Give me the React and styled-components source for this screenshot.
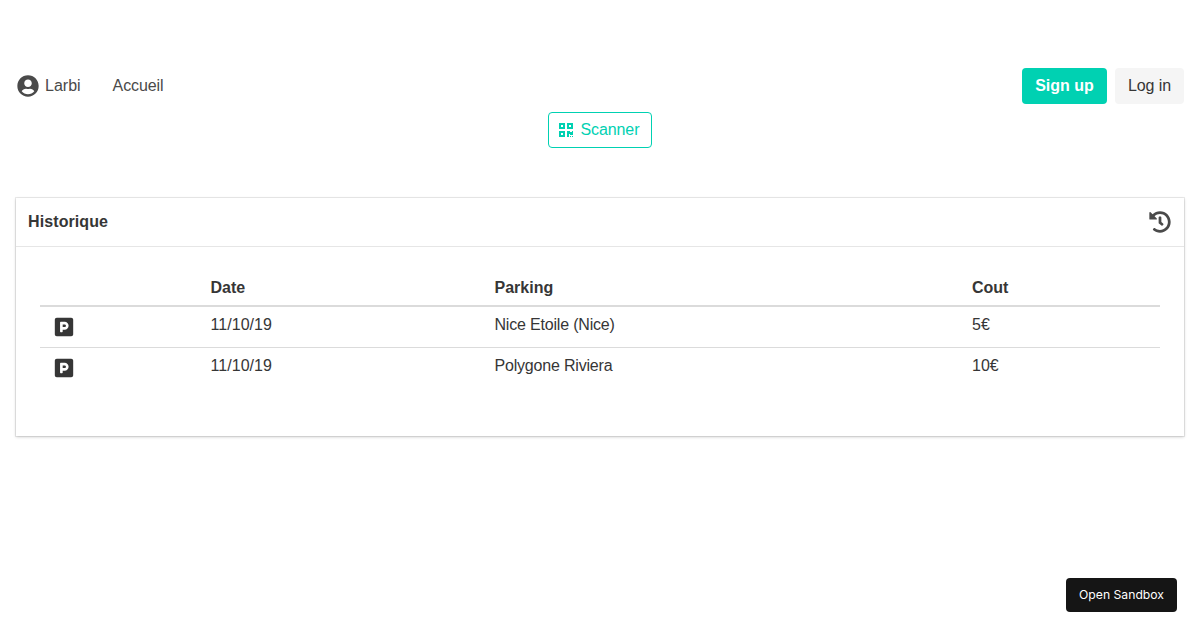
import React from "react";
import styled, { createGlobalStyle } from "styled-components";
import { FaUserCircle, FaQrcode, FaHistory, FaParking } from "react-icons/fa";

const Global = createGlobalStyle`
  html, body { margin: 0; padding: 0; background: #fff; }
  body {
    font-family: "Liberation Sans", Arial, sans-serif;
    font-size: 16px;
    line-height: 24px;
    color: #363636;
  }
  * { box-sizing: border-box; }
`;

const Page = styled.div`
  min-height: 630px;
  padding: 68px 15px 0;
`;

const Navbar = styled.nav`
  display: flex;
  align-items: center;
  justify-content: space-between;
  height: 36px;
`;

const NavGroup = styled.div`
  display: flex;
  align-items: center;
  gap: ${(p) => p.$gap}px;
  padding-left: ${(p) => p.$inset || 0}px;
  padding-right: ${(p) => p.$end || 0}px;
`;

const NavLink = styled.a`
  display: flex;
  align-items: center;
  gap: 6px;
  color: #4a4a4a;
  font-size: 16px;
  letter-spacing: ${(p) => p.$track || 0}px;
  svg { font-size: 22px; }
`;

const AuthButton = styled.a`
  display: flex;
  align-items: center;
  justify-content: center;
  width: ${(p) => p.$w}px;
  height: 36px;
  border-radius: 4px;
  font-weight: ${(p) => (p.$primary ? 700 : 400)};
  letter-spacing: ${(p) => (p.$primary ? 0 : -0.1)}px;
  background: ${(p) => (p.$primary ? "#00d1b2" : "#f5f5f5")};
  color: ${(p) => (p.$primary ? "#fff" : "#363636")};
`;

const ScannerRow = styled.div`
  display: flex;
  justify-content: center;
  margin-top: 8px;
`;

const ScannerButton = styled.a`
  display: flex;
  align-items: center;
  gap: 6.5px;
  width: 104px;
  height: 36px;
  padding-left: 9px;
  background: #fff;
  border: 1px solid #00d1b2;
  border-radius: 4px;
  color: #00d1b2;
  letter-spacing: -0.1px;
  svg { font-size: 16px; }
`;

const Card = styled.section`
  margin: 50px 1px 0;
  height: 238px;
  background: #fff;
  box-shadow: 0 1px 3px rgba(10, 10, 10, 0.2), 0 0 0 1px rgba(10, 10, 10, 0.08);
`;

const CardHeader = styled.header`
  display: flex;
  align-items: center;
  justify-content: space-between;
  height: 49px;
  padding: 0 13px 0 12px;
  border-bottom: 1px solid #e6e6e6;
`;

const CardTitle = styled.h2`
  margin: 0;
  font-size: 16px;
  font-weight: 700;
  color: #363636;
  line-height: 24px;
  letter-spacing: 0.1px;
`;

const HeaderIcon = styled.span`
  display: flex;
  color: #4a4a4a;
  svg { font-size: 22px; }
`;

const CardContent = styled.div`
  padding: 19px 24px;
`;

const Table = styled.table`
  width: 100%;
  table-layout: fixed;
  border-collapse: collapse;
`;

const Head = styled.th`
  width: ${(p) => p.$w}px;
  padding: 10px 12px 5px;
  text-align: left;
  font-weight: 700;
  color: #363636;
  border-bottom: 2px solid #dbdbdb;
`;

const Row = styled.tr`
  &:not(:last-child) td { border-bottom: 1px solid #dbdbdb; }
`;

const Cell = styled.td`
  padding: 6px 12px 10px;
  vertical-align: top;
  color: #363636;
  letter-spacing: ${(p) => p.$track || 0}px;
`;

const IconCell = styled.td`
  padding: 8px 12px;
  vertical-align: top;
`;

const ParkIcon = styled.span`
  display: flex;
  align-items: center;
  justify-content: center;
  width: 24px;
  height: 24px;
  color: #363636;
  transform: translate(-0.5px, -0.5px);
  svg { font-size: 21px; }
`;

const SandboxButton = styled.a`
  position: fixed;
  right: 23px;
  bottom: 18px;
  display: flex;
  align-items: center;
  justify-content: center;
  width: 111px;
  height: 34px;
  background: #151515;
  border-radius: 4px;
  color: #fff;
  font-family: Inter, "Liberation Sans", sans-serif;
  font-size: 12.2px;
`;

const rows = [
  { date: "11/10/19", parking: "Nice Etoile (Nice)", cost: "5€" },
  { date: "11/10/19", parking: "Polygone Riviera", cost: "10€" },
];

export default function App() {
  return (
    <Page>
      <Global />
      <Navbar>
        <NavGroup $gap={32} $inset={2}>
          <NavLink><FaUserCircle />Larbi</NavLink>
          <NavLink $track={-0.1}>Accueil</NavLink>
        </NavGroup>
        <NavGroup $gap={8} $end={1}>
          <AuthButton $primary $w={85}>Sign up</AuthButton>
          <AuthButton $w={69}>Log in</AuthButton>
        </NavGroup>
      </Navbar>
      <ScannerRow>
        <ScannerButton><FaQrcode />Scanner</ScannerButton>
      </ScannerRow>
      <Card>
        <CardHeader>
          <CardTitle>Historique</CardTitle>
          <HeaderIcon><FaHistory /></HeaderIcon>
        </CardHeader>
        <CardContent>
          <Table>
            <thead>
              <tr>
                <Head $w={158.5} />
                <Head $w={284}>Date</Head>
                <Head $w={477.5}>Parking</Head>
                <Head $w={200}>Cout</Head>
              </tr>
            </thead>
            <tbody>
              {rows.map((r) => (
                <Row key={r.parking}>
                  <IconCell><ParkIcon><FaParking /></ParkIcon></IconCell>
                  <Cell $track={0.05}>{r.date}</Cell>
                  <Cell $track={-0.19}>{r.parking}</Cell>
                  <Cell>{r.cost}</Cell>
                </Row>
              ))}
            </tbody>
          </Table>
        </CardContent>
      </Card>
      <SandboxButton>Open Sandbox</SandboxButton>
    </Page>
  );
}
